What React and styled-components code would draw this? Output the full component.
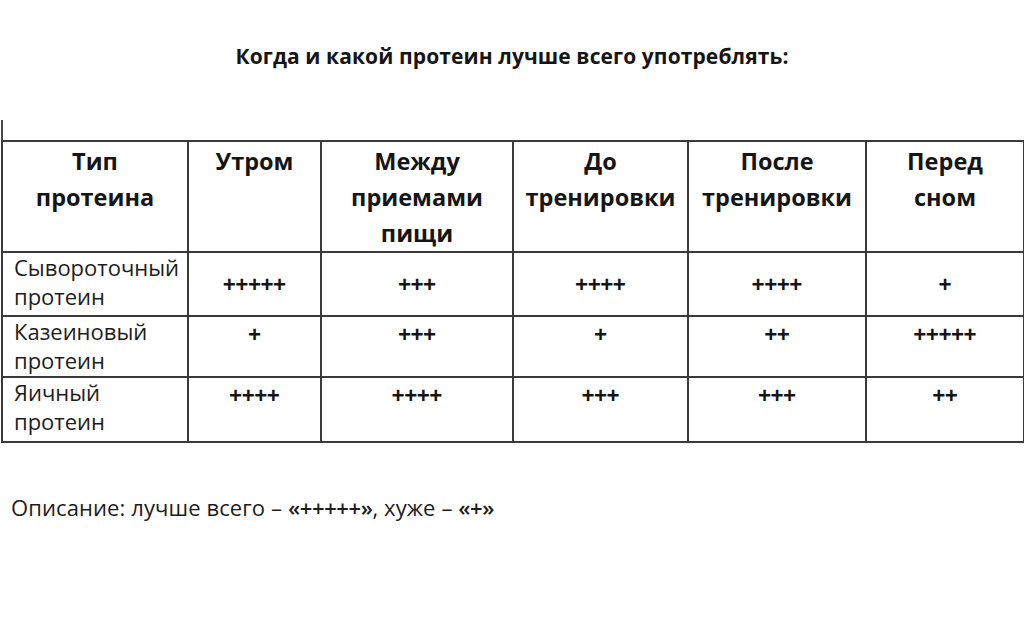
import React from "react";
import styled, { createGlobalStyle } from "styled-components";

const Global = createGlobalStyle`
  html, body { margin: 0; padding: 0; background: #fff; }
  body { font-family: "Open Sans", "Noto Sans", sans-serif; color: #1c1c1c; }
`;

const Page = styled.div`
  width: 1024px;
  height: 635px;
  background: #fff;
  overflow: hidden;
  display: flex;
  flex-direction: column;
`;

const Title = styled.h1`
  margin: 0;
  padding-top: 43px;
  height: 120px;
  box-sizing: border-box;
  text-align: center;
  font-size: 21px;
  line-height: 26px;
  font-weight: 700;
  letter-spacing: 0.1px;
  color: #151515;
`;

const Tick = styled.div`
  margin-left: 1px;
  width: 2px;
  height: 20px;
  background: #4a4a4a;
`;

const Table = styled.table`
  margin-left: 1px;
  width: 1022px;
  border-collapse: collapse;
  table-layout: fixed;
`;

const HeadCell = styled.th`
  border: 2px solid #3a3a3a;
  vertical-align: top;
  text-align: center;
  font-size: 23.5px;
  line-height: 36px;
  font-weight: 700;
  padding: 1px 2px 0;
  color: #151515;
  height: 108px;
  box-sizing: border-box;
`;

const LabelCell = styled.td`
  border: 2px solid #3a3a3a;
  vertical-align: top;
  text-align: left;
  font-size: 22px;
  line-height: 29px;
  padding: 0 0 0 11px;
  color: #1c1c1c;
  white-space: nowrap;
`;

const ValueCell = styled.td`
  border: 2px solid #3a3a3a;
  vertical-align: ${(p) => (p.$middle ? "middle" : "top")};
  text-align: center;
  font-size: 23px;
  font-weight: 700;
  line-height: 30px;
  padding: ${(p) => (p.$middle ? "0" : "2px 0 0")};
  color: #151515;
  letter-spacing: -0.6px;
  text-indent: -0.6px;
`;

const Row = styled.tr`
  height: ${(p) => p.$h}px;
`;

const Note = styled.p`
  margin: 50px 0 0 11px;
  font-size: 22px;
  line-height: 28px;
  color: #1c1c1c;
  letter-spacing: 0.1px;
`;

const Marks = styled.span`
  font-weight: 600;
  letter-spacing: -0.4px;
`;

const cols = [186, 133, 192, 175, 178, 158];
const heads = [
  ["Тип", "протеина"],
  ["Утром"],
  ["Между", "приемами", "пищи"],
  ["До", "тренировки"],
  ["После", "тренировки"],
  ["Перед", "сном"],
];
const rows = [
  { label: ["Сывороточный", "протеин"], v: [5, 3, 4, 4, 1], middle: true, h: 64 },
  { label: ["Казеиновый", "протеин"], v: [1, 3, 1, 2, 5], middle: false, h: 61 },
  { label: ["Яичный", "протеин"], v: [4, 4, 3, 3, 2], middle: false, h: 65 },
];

export default function App() {
  return (
    <Page>
      <Global />
      <Title>Когда и какой протеин лучше всего употреблять:</Title>
      <Tick />
      <Table>
        <colgroup>
          {cols.map((w, i) => (
            <col key={i} style={{ width: w }} />
          ))}
        </colgroup>
        <thead>
          <tr>
            {heads.map((h, i) => (
              <HeadCell key={i}>
                {h.map((l, j) => (
                  <React.Fragment key={j}>
                    {j > 0 && <br />}
                    {l}
                  </React.Fragment>
                ))}
              </HeadCell>
            ))}
          </tr>
        </thead>
        <tbody>
          {rows.map((r, i) => (
            <Row key={i} $h={r.h}>
              <LabelCell>
                {r.label[0]}
                <br />
                {r.label[1]}
              </LabelCell>
              {r.v.map((n, j) => (
                <ValueCell key={j} $middle={r.middle}>
                  {"+".repeat(n)}
                </ValueCell>
              ))}
            </Row>
          ))}
        </tbody>
      </Table>
      <Note>
        Описание: лучше всего – <Marks>«+++++»</Marks>, хуже – <Marks>«+»</Marks>
      </Note>
    </Page>
  );
}
